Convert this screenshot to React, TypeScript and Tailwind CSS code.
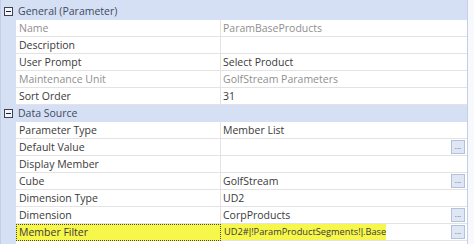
import React from "react";

type Row = {
  label: string;
  value?: string;
  readOnly?: boolean;
  button?: boolean;
  focused?: boolean;
};

type Section = { title: string; rows: Row[] };

const sections: Section[] = [
  {
    title: "General (Parameter)",
    rows: [
      { label: "Name", value: "ParamBaseProducts", readOnly: true },
      { label: "Description" },
      { label: "User Prompt", value: "Select Product" },
      { label: "Maintenance Unit", value: "GolfStream Parameters", readOnly: true },
      { label: "Sort Order", value: "31" },
    ],
  },
  {
    title: "Data Source",
    rows: [
      { label: "Parameter Type", value: "Member List" },
      { label: "Default Value", button: true },
      { label: "Display Member" },
      { label: "Cube", value: "GolfStream", button: true },
      { label: "Dimension Type", value: "UD2" },
      { label: "Dimension", value: "CorpProducts", button: true },
      { label: "Member Filter", value: "UD2#|!ParamProductSegments!|.Base", button: true, focused: true },
    ],
  },
];

/* collapse box */
function MinusBox() {
  return (
    <svg width="9" height="9" viewBox="0 0 9 9">
      <rect x="0.5" y="0.5" width="8" height="8" fill="#f4f6fb" stroke="#3c4250" />
      <line x1="2" y1="4.5" x2="7" y2="4.5" stroke="#1e2330" />
    </svg>
  );
}

function EllipsisButton() {
  return (
    <div className="w-[14px] h-[14px] mr-[2px] shrink-0 border border-[#b4c1da] bg-[#dfe6f4] flex items-center justify-center">
      <span className="text-[8px] leading-none text-[#56627a] -mt-[3px]">...</span>
    </div>
  );
}

// the pipe glyph in Open Sans is very wide, use a narrow one
function FilterText({ text }: { text: string }) {
  const parts = text.split("|");
  return (
    <span className="whitespace-nowrap text-[9.25px]">
      {parts.map((p, i) => (
        <React.Fragment key={i}>
          {i > 0 && <span style={{ fontFamily: '"Liberation Sans", sans-serif' }}>|</span>}
          {p}
        </React.Fragment>
      ))}
    </span>
  );
}

function PropRow({ row }: { row: Row }) {
  const textColor = row.readOnly ? "text-[#8f8f8f]" : "text-[#3a3a3a]";
  return (
    <div className="flex h-[17px]">
      <div className="w-[15px] shrink-0 bg-[#d6e0f5]" />
      {row.focused ? (
        <>
          <div className="w-[205px] shrink-0 h-[17px] bg-[#f6f64b] border border-dotted border-[#4a4a30] flex items-center pl-[2px]">
            <span className={textColor}>{row.label}</span>
          </div>
          <div className="flex-1 flex items-center h-[17px] border-b border-[#e3e3e3] bg-white">
            <div className="w-[165px] h-[16px] bg-[#f6f64b] flex items-center pl-[2px]">
              <span className="w-px h-[12px] bg-[#222] mr-px" />
              <span className={textColor}>
                <FilterText text={row.value ?? ""} />
              </span>
            </div>
            <div className="flex-1" />
            {row.button && <EllipsisButton />}
          </div>
        </>
      ) : (
        <>
          <div className="w-[205px] shrink-0 border-b border-r border-[#e3e3e3] bg-white flex items-center pl-[3px]">
            <span className={textColor}>{row.label}</span>
          </div>
          <div className="flex-1 border-b border-[#e3e3e3] bg-white flex items-center pl-[2px]">
            <span className={`flex-1 ${textColor}`}>{row.value}</span>
            {row.button && <EllipsisButton />}
          </div>
        </>
      )}
    </div>
  );
}

export default function App() {
  return (
    <div
      className="w-[474px] h-[244px] bg-white overflow-hidden flex text-[10.5px] leading-none"
      style={{ fontFamily: '"Open Sans", "Noto Sans", sans-serif' }}
    >
      <div className="w-[468px] flex flex-col border-l border-r border-[#c3cfe6] bg-[#d6e0f5] pt-[3px]">
        {sections.map((s) => (
          <div key={s.title} className="flex flex-col">
            {/* categoría */}
            <div className="h-[17px] flex items-center gap-[5px] pl-[3px] bg-[#d6e0f5] text-[#3f4a60]">
              <MinusBox />
              <span>{s.title}</span>
            </div>
            {s.rows.map((r) => (
              <PropRow key={r.label} row={r} />
            ))}
          </div>
        ))}
        <div className="flex-1 flex">
          <div className="w-[15px] bg-[#d6e0f5]" />
          <div className="flex-1 bg-white" />
        </div>
      </div>
      <div className="flex-1 bg-[#f7f9fd]" />
    </div>
  );
}
